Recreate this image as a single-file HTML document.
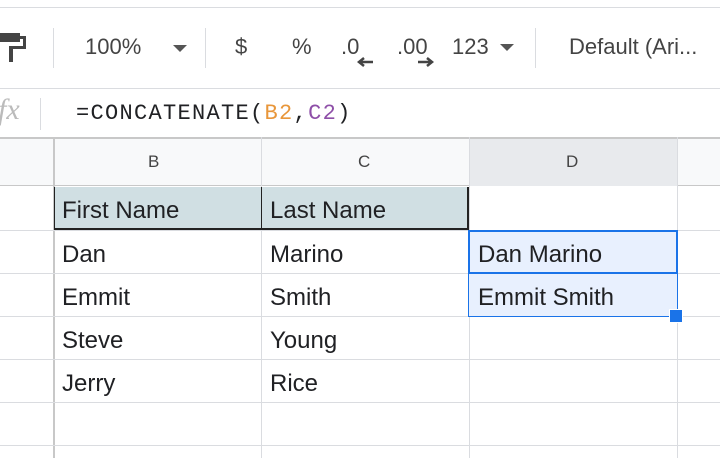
<!DOCTYPE html>
<html><head><style>
body{margin:0;width:720px;height:458px;overflow:hidden;background:#fff;font-family:"Liberation Sans",Arial,sans-serif;position:relative}
.a{position:absolute}
.tb{color:#444;font-size:22px;top:34px}
.h{position:absolute;background:#dadce0}
.cell{position:absolute;font-size:24px;color:#202124}
</style></head><body>
<div class="a" style="left:0;top:0;width:720px;height:7px;background:#fff;border-bottom:1px solid #dadce0"></div>
<svg class="a" style="left:0;top:30px" width="30" height="36"><rect x="0" y="3" width="20" height="9" fill="#444"/><rect x="20" y="6" width="6" height="3" fill="#444"/><rect x="23" y="6" width="3" height="12" fill="#444"/><rect x="10" y="16" width="16" height="3" fill="#444"/><rect x="9" y="16" width="4" height="16" fill="#444"/></svg>
<div class="h" style="left:53px;top:28px;width:1px;height:40px"></div>
<div class="a tb" style="left:85px">100%</div>
<div class="a" style="left:173px;top:45px;width:0;height:0;border-left:7px solid transparent;border-right:7px solid transparent;border-top:7px solid #555"></div>
<div class="h" style="left:205px;top:28px;width:1px;height:40px"></div>
<div class="a tb" style="left:235px">$</div>
<div class="a tb" style="left:292px">%</div>
<div class="a tb" style="left:341px">.0</div>
<svg class="a" style="left:355px;top:56px" width="20" height="12"><path d="M18 6H5M9 2L4 6l5 4" stroke="#444" stroke-width="2.5" fill="none"/></svg>
<div class="a tb" style="left:397px">.00</div>
<svg class="a" style="left:416px;top:56px" width="20" height="12"><path d="M2 6h13M11 2l5 4-5 4" stroke="#444" stroke-width="2.5" fill="none"/></svg>
<div class="a tb" style="left:452px">123</div>
<div class="a" style="left:500px;top:44px;width:0;height:0;border-left:7px solid transparent;border-right:7px solid transparent;border-top:7px solid #555"></div>
<div class="h" style="left:535px;top:28px;width:1px;height:40px"></div>
<div class="a tb" style="left:569px">Default (Ari...</div>
<div class="h" style="left:0;top:88px;width:720px;height:1px"></div>
<div class="a" style="left:-2px;top:93px;font-family:'Liberation Serif',serif;font-style:italic;font-size:30px;color:#bbb">fx</div>
<div class="h" style="left:40px;top:98px;width:1px;height:32px"></div>
<div class="a" style="left:76px;top:101px;font-family:'Liberation Mono',monospace;font-size:22px;color:#202124;letter-spacing:1.3px">=CONCATENATE(<span style="color:#e8963a">B2</span>,<span style="color:#8e4fa8">C2</span>)</div>
<div class="a" style="left:0;top:137px;width:720px;height:49px;background:#f8f9fa;border-top:2px solid #c8c8c8;border-bottom:1px solid #c8c8c8;box-sizing:border-box"></div>
<div class="a" style="left:469px;top:139px;width:208px;height:47px;background:#e8eaed"></div>
<div class="a" style="left:148px;top:152px;font-size:17px;color:#444">B</div>
<div class="a" style="left:358px;top:152px;font-size:17px;color:#444">C</div>
<div class="a" style="left:566px;top:152px;font-size:17px;color:#444">D</div>
<div class="h" style="left:53px;top:137px;width:2px;height:321px;background:#c8c8c8"></div>
<div class="h" style="left:261px;top:137px;width:1px;height:321px"></div>
<div class="h" style="left:469px;top:137px;width:1px;height:321px"></div>
<div class="h" style="left:677px;top:137px;width:1px;height:321px"></div>
<div class="h" style="left:0;top:230px;width:720px;height:1px"></div>
<div class="h" style="left:0;top:273px;width:720px;height:1px"></div>
<div class="h" style="left:0;top:316px;width:720px;height:1px"></div>
<div class="h" style="left:0;top:359px;width:720px;height:1px"></div>
<div class="h" style="left:0;top:402px;width:720px;height:1px"></div>
<div class="h" style="left:0;top:445px;width:720px;height:1px"></div>
<div class="a" style="left:54px;top:187px;width:415px;height:43px;background:#d0dfe3;border-bottom:2px solid #222;border-right:2px solid #222;box-sizing:border-box"></div>
<div class="a" style="left:261px;top:187px;width:1px;height:43px;background:#222"></div>
<div class="a" style="left:54px;top:187px;width:1px;height:43px;background:#222"></div>
<div class="cell" style="left:62px;top:197px">First Name</div>
<div class="cell" style="left:270px;top:197px">Last Name</div>
<div class="cell" style="left:62px;top:241px">Dan</div>
<div class="cell" style="left:270px;top:241px">Marino</div>
<div class="cell" style="left:62px;top:284px">Emmit</div>
<div class="cell" style="left:270px;top:284px">Smith</div>
<div class="cell" style="left:62px;top:327px">Steve</div>
<div class="cell" style="left:270px;top:327px">Young</div>
<div class="cell" style="left:62px;top:370px">Jerry</div>
<div class="cell" style="left:270px;top:370px">Rice</div>
<div class="a" style="left:468px;top:230px;width:210px;height:87px;background:#e8f0fe;border:1px solid #1a73e8;box-sizing:border-box"></div>
<div class="a" style="left:468px;top:230px;width:210px;height:44px;border:2px solid #1a73e8;box-sizing:border-box"></div>
<div class="cell" style="left:478px;top:241px">Dan Marino</div>
<div class="cell" style="left:478px;top:284px">Emmit Smith</div>
<div class="a" style="left:669px;top:309px;width:12px;height:12px;background:#1a73e8;border:1px solid #fff"></div>
</body></html>
